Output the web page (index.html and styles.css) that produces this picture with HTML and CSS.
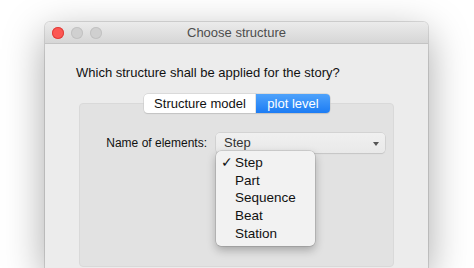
FILE: index.html
```html
<!DOCTYPE html>
<html lang="en">
<head>
    <meta charset="UTF-8">
    <title>Choose structure</title>
    <link rel="stylesheet" href="styles.css">
</head>
<body>

<div class="window">
    <div class="titlebar">
        <div class="lights">
            <span class="light close"></span>
            <span class="light"></span>
            <span class="light"></span>
        </div>
        <div class="title">Choose structure</div>
    </div>
    <div class="content">
        <p class="question">Which structure shall be applied for the story?</p>
        <div class="tabs">
            <div class="segment">Structure model</div>
            <div class="segment active">plot level</div>
        </div>
        <div class="groupbox">
            <div class="row">
                <label class="label">Name of elements:</label>
                <div class="popup">
                    <span>Step</span>
                    <span class="arrow"></span>
                    <ul class="menu">
                        <li class="checked">Step</li>
                        <li>Part</li>
                        <li>Sequence</li>
                        <li>Beat</li>
                        <li>Station</li>
                    </ul>
                </div>
            </div>
        </div>
    </div>
</div>

</body>
</html>
```

FILE: styles.css
```css
html, body {
    margin: 0;
    height: 100%;
    overflow: hidden;
}
body {
    background: #ffffff;
    font-family: "Liberation Sans", Arial, sans-serif;
    font-size: 13px;
    padding: 22px 0 0 45px;
    box-sizing: border-box;
}
.window {
    width: 383px;
    height: 246px;
    background: #ececec;
    border-radius: 5px 5px 0 0;
    box-shadow: 0 0 0 1px rgba(0, 0, 0, 0.12), 0 12px 40px rgba(0, 0, 0, 0.35);
    overflow: hidden;
}
.titlebar {
    height: 21px;
    background: linear-gradient(#ebebeb, #d6d6d6);
    border-bottom: 1px solid #c4c4c4;
    display: flex;
    align-items: center;
    position: relative;
}
.lights {
    display: flex;
    gap: 7px;
    padding-left: 7px;
}
.light {
    width: 12px;
    height: 12px;
    border-radius: 50%;
    background: #d0d0d0;
    box-shadow: inset 0 0 0 1px #c2c2c2;
}
.light.close {
    background: #fc5753;
    box-shadow: inset 0 0 0 1px #df3f3b;
}
.title {
    position: absolute;
    left: 0;
    right: 0;
    text-align: center;
    color: #4d4d4d;
    font-size: 13px;
}
.content {
    padding: 21px 34px 0 35px;
}
.question {
    margin: 0 0 14px -4px;
    color: #111;
}
.tabs {
    display: flex;
    justify-content: center;
    margin: 0 auto -10px;
    position: relative;
    z-index: 1;
}
.segment {
    height: 19px;
    line-height: 19px;
    padding: 0 9px;
    background: #ffffff;
    color: #111;
    box-shadow: 0 0 0 0.5px #c8c8c8, 0 1px 1px rgba(0, 0, 0, 0.15);
    border-radius: 4px 0 0 4px;
    width: 94px;
    text-align: center;
}
.segment.active {
    background: linear-gradient(#4ea2fb, #1c7cf4);
    color: #ffffff;
    border-radius: 0 4px 4px 0;
    width: 56px;
}
.groupbox {
    height: 133px;
    margin-left: -1px;
    background: #e2e2e2;
    border: 1px solid #d9d9d9;
    border-radius: 4px;
    padding: 29px 8px 0 0;
}
.row {
    display: flex;
    align-items: center;
}
.label {
    width: 127px;
    text-align: right;
    color: #111;
    font-size: 12px;
    margin-right: 9px;
}
.popup {
    position: relative;
    width: 161px;
    height: 20px;
    padding-left: 8px;
    line-height: 20px;
    background: linear-gradient(#f0f0f0, #e9e9e9);
    border-radius: 4px;
    box-shadow: 0 0 0 0.5px #c4c4c4, 0 1px 1px rgba(0, 0, 0, 0.12);
    color: #333;
}
.arrow {
    position: absolute;
    right: 6px;
    top: 9px;
    border-left: 3.5px solid transparent;
    border-right: 3.5px solid transparent;
    border-top: 4px solid #555;
}
.menu {
    position: absolute;
    left: 0;
    top: 18px;
    width: 99px;
    margin: 0;
    padding: 3px 0 4px;
    list-style: none;
    background: #f2f2f2;
    border-radius: 5px;
    box-shadow: 0 0 0 0.5px rgba(0, 0, 0, 0.2), 0 4px 10px rgba(0, 0, 0, 0.28);
}
.menu li {
    height: 17.7px;
    line-height: 17.7px;
    padding-left: 19px;
    color: #111;
    font-size: 13.5px;
    position: relative;
}
.menu li.checked::before {
    content: "\2713";
    position: absolute;
    left: 5px;
    font-size: 14px;
}
```
